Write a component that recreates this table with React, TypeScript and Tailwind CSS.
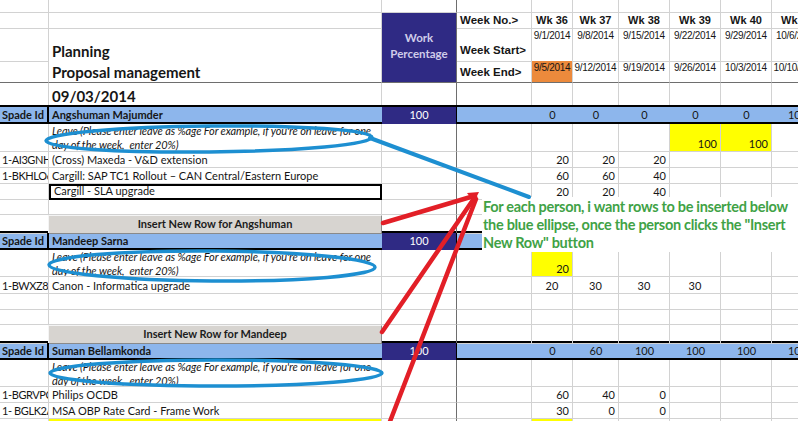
import React from "react"
import { twMerge } from "tailwind-merge"

const cols = "grid grid-cols-[49px_333px_75px_75px_41px_46px_51px_51px_51px_51px]"

function Cell({ className = "", children }: { className?: string; children?: React.ReactNode }) {
  return (
    <div className={twMerge("overflow-hidden whitespace-nowrap border-b border-r border-[#d2d2d2]", className)}>
      {children}
    </div>
  )
}

type Val = string | number | null

// six week columns: wk36 .. wk41
function WeekCells({
  vals = [],
  align = "right",
  yellow = [],
  className = "",
}: {
  vals?: Val[]
  align?: "right" | "center"
  yellow?: number[]
  className?: string
}) {
  return (
    <>
      {[0, 1, 2, 3, 4, 5].map((i) => (
        <Cell
          key={i}
          className={twMerge(
            "flex items-end pb-[1px] leading-[13px]",
            align === "right" ? "justify-end pr-[3px]" : "justify-center",
            yellow.includes(i) && "bg-[#ffff00]",
            className
          )}
        >
          {vals[i] ?? ""}
        </Cell>
      ))}
    </>
  )
}

function DataRow({
  h,
  id = "",
  name = "",
  vals,
  align,
  boxed = false,
}: {
  h: string
  id?: string
  name?: string
  vals?: Val[]
  align?: "right" | "center"
  boxed?: boolean
}) {
  return (
    <div className={twMerge(cols, h)}>
      <Cell className="flex items-end pl-[2px] pb-[1px] leading-[13px] tracking-[-0.4px]">{id}</Cell>
      <Cell
        className={twMerge(
          "flex items-end pl-[3px] pb-[1px] leading-[13px]",
          boxed && "border-2 border-black"
        )}
      >
        {name}
      </Cell>
      <Cell className="border-r-[#6e6e6e]" />
      <Cell />
      <WeekCells vals={vals} align={align} />
    </div>
  )
}

function PersonHeader({ name, total, vals }: { name: string; total: number; vals: Val[] }) {
  return (
    <div className={twMerge(cols, "h-[19px] border-y-2 border-black bg-[#8db6ec]")}>
      <div className="flex items-center border-r-2 border-black pl-[2px] font-bold">Spade Id</div>
      <div className="flex items-center pl-[3px] font-bold">{name}</div>
      <div className="flex items-center justify-center border-r border-black bg-[#2f2a84] text-white">{total}</div>
      <div />
      {[0, 1, 2, 3, 4, 5].map((i) => (
        <div key={i} className="flex items-center justify-center">
          {vals[i] ?? ""}
        </div>
      ))}
    </div>
  )
}

function LeaveRow({ h, yellow = [], vals = [] }: { h: string; yellow?: number[]; vals?: Val[] }) {
  return (
    <div className={twMerge(cols, h)}>
      <Cell />
      <Cell className="pl-[3px] text-[11px] italic leading-[14px] tracking-[-0.1px]">
        <div>Leave (Please enter leave as %age For example, if you're on leave for one</div>
        <div>day of the week,&nbsp; enter 20%)</div>
      </Cell>
      <Cell className="border-r-[#6e6e6e]" />
      <Cell />
      <WeekCells vals={vals} yellow={yellow} />
    </div>
  )
}

function ButtonRow({ label }: { label: string }) {
  return (
    <div className={twMerge(cols, "h-[16px]")}>
      <Cell />
      <div className="-ml-[1px] flex items-center justify-center border border-b-[#8a8a8a] border-l-[#f4f4f4] border-r-[#8a8a8a] border-t-[#f4f4f4] bg-[#d7d4d0] font-bold text-[#1c1c1c]">
        {label}
      </div>
      <Cell className="border-r-[#6e6e6e]" />
      <Cell />
      <WeekCells />
    </div>
  )
}

const weeks = ["Wk 36", "Wk 37", "Wk 38", "Wk 39", "Wk 40", "Wk 41"]
const starts = ["9/1/2014", "9/8/2014", "9/15/2014", "9/22/2014", "9/29/2014", "10/6/2014"]
const ends = ["9/5/2014", "9/12/2014", "9/19/2014", "9/26/2014", "10/3/2014", "10/10/2014"]

export default function App() {
  return (
    <div className="relative h-[421px] w-[798px] overflow-hidden bg-white font-['Lato',sans-serif] text-[11px] text-[#161616]">
      {/* title block */}
      <div className={twMerge(cols, "h-[13px]")}>
        <Cell />
        <Cell />
        <Cell className="border-r-[#6e6e6e]" />
        <Cell />
        <WeekCells />
      </div>
      <div className={twMerge(cols, "h-[16px]")}>
        <Cell />
        <Cell />
        <div className="border-r border-[#6e6e6e] bg-[#2f2a84]" />
        <Cell className="flex items-center pl-[3px] font-['Liberation_Sans',sans-serif] text-[11.5px] font-bold">
          Week No.&gt;
        </Cell>
        {weeks.map((w) => (
          <Cell key={w} className="flex items-center justify-center font-['Liberation_Sans',sans-serif] text-[11px] font-bold">
            {w}
          </Cell>
        ))}
      </div>
      <div className={twMerge(cols, "h-[32px]")}>
        <Cell />
        <Cell className="flex items-end border-b-0 pb-[2px] pl-[3px] text-[15px] font-bold leading-[18px]">Planning</Cell>
        <div className="flex flex-col items-center border-r border-[#6e6e6e] bg-[#2f2a84] pt-[1px] text-[11.5px] font-bold leading-[16px] text-[#cfcdea]">
          <span>Work</span>
          <span>Percentage</span>
        </div>
        <Cell className="flex items-end pb-[2px] pl-[3px] font-['Liberation_Sans',sans-serif] text-[11.5px] font-bold">
          Week Start&gt;
        </Cell>
        {starts.map((d) => (
          <Cell key={d} className="flex justify-center pt-[1px] font-['Liberation_Sans',sans-serif] text-[10px] leading-[12px] tracking-[-0.3px]">
            {d}
          </Cell>
        ))}
      </div>
      <div className={twMerge(cols, "h-[22px]")}>
        <Cell className="border-b-[#6e6e6e]" />
        <Cell className="flex items-center border-b-[#6e6e6e] pl-[3px] text-[15px] font-bold leading-[18px]">
          Proposal management
        </Cell>
        <div className="border-b border-r border-[#6e6e6e] bg-[#2f2a84]" />
        <Cell className="flex items-end border-b-[#6e6e6e] pb-[1px] pl-[3px] font-['Liberation_Sans',sans-serif] text-[11.5px] font-bold">
          Week End&gt;
        </Cell>
        {ends.map((d, i) => (
          <Cell
            key={d}
            className={twMerge(
              "flex justify-center border-b-[#6e6e6e] pt-[1px] font-['Liberation_Sans',sans-serif] text-[10px] leading-[12px] tracking-[-0.3px]",
              i === 0 && "bg-[#ec8a3c]"
            )}
          >
            {d}
          </Cell>
        ))}
      </div>
      <div className={twMerge(cols, "h-[22px]")}>
        <Cell className="border-b-0" />
        <Cell className="flex items-end border-b-0 pb-[0px] pl-[3px] text-[15px] font-bold leading-[18px]">09/03/2014</Cell>
        <Cell className="border-b-0 border-r-[#6e6e6e]" />
        <Cell className="border-b-0" />
        <WeekCells className="border-b-0" />
      </div>

      {/* Angshuman */}
      <PersonHeader name="Angshuman Majumder" total={100} vals={[0, 0, 0, 0, 0, 100]} />
      <LeaveRow h="h-[28px]" yellow={[3, 4]} vals={[null, null, null, 100, 100]} />
      <DataRow h="h-[16px]" id="1-AI3GNH" name="(Cross) Maxeda - V&D extension" vals={[20, 20, 20]} />
      <DataRow h="h-[16px]" id="1-BKHLO6" name="Cargill: SAP TC1 Rollout – CAN Central/Eastern Europe" vals={[60, 60, 40]} />
      <DataRow h="h-[16px]" name="Cargill - SLA upgrade" vals={[20, 20, 40]} boxed />
      <DataRow h="h-[15px]" />
      <ButtonRow label="Insert New Row for Angshuman" />

      {/* Mandeep (week totals sit under the note box) */}
      <PersonHeader name="Mandeep Sarna" total={100} vals={[]} />
      <LeaveRow h="h-[27px]" yellow={[0]} vals={[20]} />
      <DataRow h="h-[17px]" id="1-BWXZ8U" name="Canon - Informatica upgrade" vals={[20, 30, 30, 30]} align="center" />
      <DataRow h="h-[16px]" />
      <DataRow h="h-[15px]" />
      <ButtonRow label="Insert New Row for Mandeep" />

      {/* Suman */}
      <PersonHeader name="Suman Bellamkonda" total={100} vals={[0, 60, 100, 100, 100, 100]} />
      <LeaveRow h="h-[27px]" />
      <DataRow h="h-[16px]" id="1-BGRVPO" name="Philips OCDB" vals={[60, 40, 0]} />
      <DataRow h="h-[16px]" id="1- BGLK2A" name="MSA OBP Rate Card - Frame Work" vals={[30, 0, 0]} />
      <div className={twMerge(cols, "h-[16px]")}>
        <Cell />
        <Cell className="bg-[#ffff00]" />
        <Cell className="border-r-[#6e6e6e]" />
        <Cell />
        <WeekCells yellow={[0]} />
      </div>

      {/* note box */}
      <div className="absolute left-[482px] top-[197px] h-[55px] w-[316px] bg-white pl-[1px] pt-[1px] text-[14.5px] font-bold leading-[18px] tracking-[-0.3px] text-[#3fa246]">
        <div>For each person, i want rows to be inserted below</div>
        <div>the blue ellipse, once the person clicks the "Insert</div>
        <div>New Row" button</div>
      </div>

      {/* hand-drawn marks */}
      <svg className="pointer-events-none absolute left-0 top-0" width="798" height="421" viewBox="0 0 798 421">
        <g fill="none" stroke="#1d8fd1" strokeWidth="3.5" strokeLinecap="round">
          <ellipse cx="209" cy="139" rx="163" ry="13" transform="rotate(-0.6 209 139)" />
          <ellipse cx="212" cy="266" rx="163" ry="15" transform="rotate(0.4 212 266)" />
          <ellipse cx="216" cy="373" rx="166" ry="13" />
          <path d="M370 138 L529 197" strokeWidth="4" />
        </g>
        <g fill="none" stroke="#e21f27" strokeWidth="4.5" strokeLinecap="round">
          <path d="M383 223 L474 196" />
          <path d="M382 332 L475 197" />
          <path d="M389 424 L476 199" />
        </g>
        <polygon points="479,192 467,193 474,202" fill="#e21f27" />
      </svg>
    </div>
  )
}
